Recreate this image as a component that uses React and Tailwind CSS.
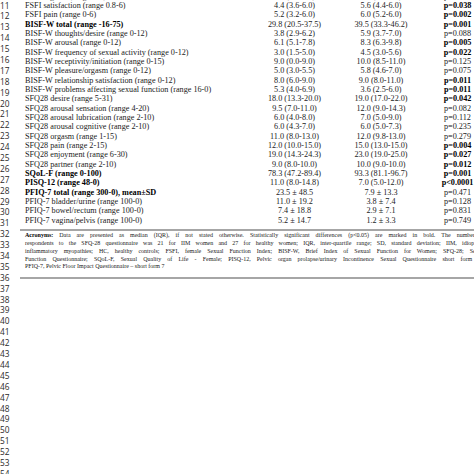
import React from "react";

const rows = [
  ["FSFI orgasm (range 0-6)", "4.0 (2.8-5.2)", "4.8 (4.0-5.6)", "p=0.061", false, false],
  ["FSFI satisfaction (range 0.8-6)", "4.4 (3.6-6.0)", "5.6 (4.4-6.0)", "p=0.038", false, true],
  ["FSFI pain (range 0-6)", "5.2 (3.2-6.0)", "6.0 (5.2-6.0)", "p=0.002", false, true],
  ["BISF-W total (range -16-75)", "29.8 (20.5-37.5)", "39.5 (33.3-46.2)", "p=0.001", true, true],
  ["BISF-W thoughts/desire (range 0-12)", "3.8 (2.9-6.2)", "5.9 (3.7-7.0)", "p=0.088", false, false],
  ["BISF-W arousal (range 0-12)", "6.1 (5.1-7.8)", "8.3 (6.3-9.8)", "p=0.005", false, true],
  ["BISF-W frequency of sexual activity (range 0-12)", "3.0 (1.5-5.0)", "4.5 (3.0-5.6)", "p=0.022", false, true],
  ["BISF-W receptivity/initiation (range 0-15)", "9.0 (0.0-9.0)", "10.0 (8.5-11.0)", "p=0.125", false, false],
  ["BISF-W pleasure/orgasm (range 0-12)", "5.0 (3.0-5.5)", "5.8 (4.6-7.0)", "p=0.075", false, false],
  ["BISF-W relationship satisfaction (range 0-12)", "8.0 (6.0-9.0)", "9.0 (8.0-11.0)", "p=0.011", false, true],
  ["BISF-W problems affecting sexual function (range 16-0)", "5.3 (4.0-6.9)", "3.6 (2.5-6.0)", "p=0.011", false, true],
  ["SFQ28 desire (range 5-31)", "18.0 (13.3-20.0)", "19.0 (17.0-22.0)", "p=0.042", false, true],
  ["SFQ28 arousal sensation (range 4-20)", "9.5 (7.0-11.0)", "12.0 (9.0-14.3)", "p=0.082", false, false],
  ["SFQ28 arousal lubrication (range 2-10)", "6.0 (4.0-8.0)", "7.0 (5.0-9.0)", "p=0.112", false, false],
  ["SFQ28 arousal cognitive (range 2-10)", "6.0 (4.3-7.0)", "6.0 (5.0-7.3)", "p=0.235", false, false],
  ["SFQ28 orgasm (range 1-15)", "11.0 (8.0-13.0)", "12.0 (9.8-13.0)", "p=0.279", false, false],
  ["SFQ28 pain (range 2-15)", "12.0 (10.0-15.0)", "15.0 (13.0-15.0)", "p=0.004", false, true],
  ["SFQ28 enjoyment (range 6-30)", "19.0 (14.3-24.3)", "23.0 (19.0-25.0)", "p=0.027", false, true],
  ["SFQ28 partner (range 2-10)", "9.0 (8.0-10.0)", "10.0 (9.0-10.0)", "p=0.012", false, true],
  ["SQoL-F (range 0-100)", "78.3 (47.2-89.4)", "93.3 (81.1-96.7)", "p=0.001", true, true],
  ["PISQ-12 (range 48-0)", "11.0 (8.0-14.8)", "7.0 (5.0-12.0)", "p<0.0001", true, true],
  ["PFIQ-7 total (range 300-0), mean±SD", "23.5 ± 48.5", "7.9 ± 13.3", "p=0.471", true, false],
  ["PFIQ-7 bladder/urine (range 100-0)", "11.0 ± 19.2", "3.8 ± 7.4", "p=0.128", false, false],
  ["PFIQ-7 bowel/rectum (range 100-0)", "7.4 ± 18.8", "2.9 ± 7.1", "p=0.831", false, false],
  ["PFIQ-7 vagina/pelvis (range 100-0)", "5.2 ± 14.7", "1.2 ± 3.3", "p=0.749", false, false],
];

const lineNumbers = [];
for (let i = 10; i <= 55; i++) lineNumbers.push(i);

export default function App() {
  return (
    <div className="w-[474px] h-[474px] overflow-hidden bg-white flex">
      <div className="w-[9.5px] shrink-0 mt-[-10.35px] text-right font-['Open_Sans',sans-serif] text-[8.3px] leading-[10.905px] text-[#2a2a2a] whitespace-nowrap">
        {lineNumbers.map((n) => (
          <div key={n} className="h-[10.905px]">{n}</div>
        ))}
      </div>
      <div className="ml-[10.5px] w-[480px] shrink-0 mt-[-8.3px] font-['Liberation_Serif',serif] text-[8.2px] text-[#222]">
        {rows.map(([label, a, b, p, boldLabel, boldP], i) => (
          <div key={i} className="flex h-[9.33px] leading-[9.33px] whitespace-nowrap">
            <div className={"w-[230px] shrink-0 pl-[5px] " + (boldLabel ? "font-bold text-black" : "")}>{label}</div>
            <div className="w-[89px] shrink-0 text-center">{a}</div>
            <div className="w-[84px] shrink-0 text-center">{b}</div>
            <div className={"w-[69px] shrink-0 text-center " + (boldP ? "font-bold text-black" : "")}>{p}</div>
          </div>
        ))}
        <div className="mt-[4.5px] h-[2px] bg-[#a6a6a6]" />
        <div className="pl-[5px] pt-[1px] text-[6px] leading-[7.75px] text-[#222]">
          <div className="w-[461px] whitespace-nowrap text-justify [text-align-last:justify]">
            <span className="font-bold text-black">Acronyms:</span> Data are presented as median (IQR), if not stated otherwise. Statistically significant differences (p&lt;0.05) are marked in bold. The number of
          </div>
          <div className="w-[461px] whitespace-nowrap text-justify [text-align-last:justify]">
            respondents to the SFQ-28 questionnaire was 21 for IIM women and 27 for healthy women; IQR, inter-quartile range; SD, standard deviation; IIM, idiopathic
          </div>
          <div className="w-[461px] whitespace-nowrap text-justify [text-align-last:justify]">
            inflammatory myopathies; HC, healthy controls; FSFI, female Sexual Function Index; BISF-W, Brief Index of Sexual Function for Women; SFQ-28; Sexual
          </div>
          <div className="w-[461px] whitespace-nowrap text-justify [text-align-last:justify]">
            Function Questionnaire; SQoL-F, Sexual Quality of Life - Female; PISQ-12, Pelvic organ prolapse/urinary Incontinence Sexual Questionnaire short form 12;
          </div>
          <div className="whitespace-nowrap">
            PFIQ-7, Pelvic Floor Impact Questionnaire – short form 7
          </div>
        </div>
        <div className="mt-[5.5px] h-[2px] bg-[#a6a6a6]" />
      </div>
    </div>
  );
}
